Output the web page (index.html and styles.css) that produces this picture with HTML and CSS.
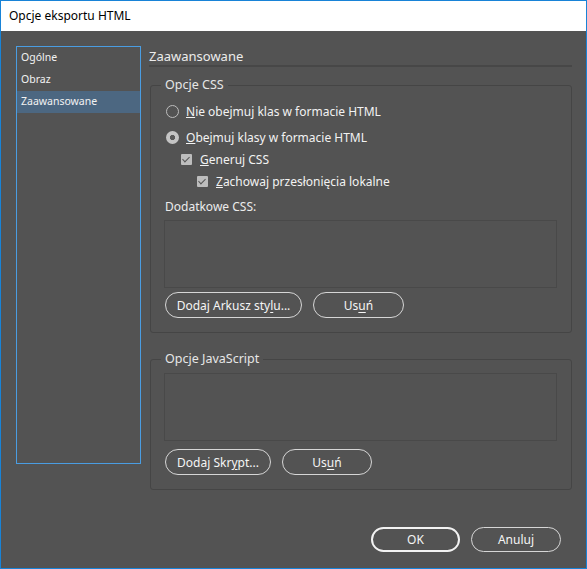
FILE: index.html
```html
<!DOCTYPE html>
<html lang="pl">
<head>
    <meta charset="UTF-8" />
    <title>Opcje eksportu HTML</title>
    <link rel="stylesheet" href="styles.css">
</head>
<body>
    <div class="window">
        <div class="titlebar">Opcje eksportu HTML</div>
        <div class="dialog">
            <ul class="nav-list">
                <li>Ogólne</li>
                <li>Obraz</li>
                <li class="active">Zaawansowane</li>
            </ul>

            <div class="panel">
                <div class="panel-title">Zaawansowane</div>

                <fieldset class="group group-css">
                    <legend>Opcje CSS</legend>
                    <div class="option radio first">
                        <span class="radio-mark"></span>
                        <span><u>N</u>ie obejmuj klas w formacie HTML</span>
                    </div>
                    <div class="option radio second">
                        <span class="radio-mark checked"></span>
                        <span><u>O</u>bejmuj klasy w formacie HTML</span>
                    </div>
                    <div class="option check level-1">
                        <span class="check-mark"></span>
                        <span><u>G</u>eneruj CSS</span>
                    </div>
                    <div class="option check level-2">
                        <span class="check-mark"></span>
                        <span><u>Z</u>achowaj przesłonięcia lokalne</span>
                    </div>
                    <div class="field-label">Dodatkowe CSS:</div>
                    <div class="list-box"></div>
                    <div class="btn-row">
                        <button class="btn btn-add-css">Dodaj Arkusz sty<u>l</u>u...</button>
                        <button class="btn btn-remove">Us<u>u</u>ń</button>
                    </div>
                </fieldset>

                <fieldset class="group group-js">
                    <legend>Opcje JavaScript</legend>
                    <div class="list-box"></div>
                    <div class="btn-row js-row">
                        <button class="btn btn-add-js">Dodaj Skr<u>y</u>pt...</button>
                        <button class="btn btn-remove-js">Us<u>u</u>ń</button>
                    </div>
                </fieldset>

                <div class="footer">
                    <button class="btn btn-main">OK</button>
                    <button class="btn btn-cancel">Anuluj</button>
                </div>
            </div>
        </div>
    </div>
</body>
</html>
```

FILE: styles.css
```css
* {
    box-sizing: border-box;
    margin: 0;
    padding: 0;
}
body {
    font-family: 'Noto Sans', 'Open Sans', sans-serif;
    font-size: 12px;
    background: #535353;
}
.window {
    width: 587px;
    height: 569px;
    border: 1px solid #1883d7;
    background: #535353;
    display: flex;
    flex-direction: column;
}
.titlebar {
    height: 30px;
    line-height: 29px;
    background: #ffffff;
    color: #000000;
    padding-left: 8px;
    font-size: 12px;
}
.dialog {
    flex: 1;
    display: flex;
    align-items: flex-start;
    padding: 15px 0 0 15px;
}
.nav-list {
    list-style: none;
    width: 125px;
    height: 418px;
    border: 1px solid #4a9de2;
}
.nav-list li {
    height: 22px;
    line-height: 20px;
    padding-left: 4px;
    color: #f2f2f2;
    font-size: 10.5px;
}
.nav-list li.active {
    background: #4c6781;
}
.panel {
    width: 423px;
    margin-left: 8px;
}
.panel-title {
    height: 21px;
    line-height: 20px;
    font-size: 13px;
    color: #ececec;
    border-bottom: 2px solid #474747;
}
.group {
    margin: 10px 0 0 1px;
    width: 422px;
    border: 1px solid #454545;
    border-radius: 3px;
    padding: 0 14px 14px 14px;
}
.group legend {
    line-height: 16px;
    font-size: 12.5px;
    color: #e6e6e6;
    padding: 0 4px;
    margin-left: -4px;
}
.option {
    height: 22px;
    display: flex;
    align-items: center;
    color: #f2f2f2;
}
.option.first {
    margin-top: 7px;
}
.option.second {
    margin-top: 4px;
}
.radio-mark {
    width: 13px;
    height: 13px;
    border-radius: 50%;
    border: 1.5px solid #bdbdbd;
    margin: 0 7px 0 1px;
    flex-shrink: 0;
}
.radio-mark.checked {
    border: none;
    background: radial-gradient(circle, #5a5a5a 0 2.4px, #c4c4c4 2.9px);
}
.check-mark {
    width: 11px;
    height: 11px;
    background: #bdbdbd;
    border-radius: 1px;
    margin-right: 8px;
    position: relative;
    flex-shrink: 0;
}
.check-mark::after {
    content: '';
    position: absolute;
    left: 3px;
    top: 1px;
    width: 3px;
    height: 6px;
    border: solid #555555;
    border-width: 0 1.5px 1.5px 0;
    transform: rotate(45deg);
}
.level-1 {
    padding-left: 16px;
}
.level-2 {
    padding-left: 32px;
}
.field-label {
    margin-top: 4px;
    height: 22px;
    line-height: 22px;
    color: #ececec;
}
.list-box {
    margin: 2px 0 0 -1px;
    width: 393px;
    height: 68px;
    border: 1px solid #494949;
}
.btn-row {
    display: flex;
    gap: 11px;
    margin-top: 4px;
}
.js-row {
    margin-top: 8px;
}
.group-js {
    margin-top: 18px;
}
.group-js .list-box {
    margin-top: 6px;
}
.btn {
    height: 26px;
    border: 1px solid #d6d6d6;
    border-radius: 13px;
    background: transparent;
    color: #f5f5f5;
    font-family: inherit;
    font-size: 12px;
    text-align: center;
}
.btn u {
    text-underline-offset: 2px;
}
.btn-add-css {
    width: 137px;
}
.btn-remove {
    width: 91px;
}
.btn-add-js {
    width: 106px;
}
.btn-remove-js {
    width: 90px;
}
.footer {
    display: flex;
    justify-content: flex-end;
    gap: 11px;
    margin-top: 37px;
    padding-right: 11px;
}
.btn-main {
    width: 89px;
    height: 25px;
    border: 2px solid #f2f2f2;
}
.btn-cancel {
    width: 90px;
    height: 25px;
}
```
